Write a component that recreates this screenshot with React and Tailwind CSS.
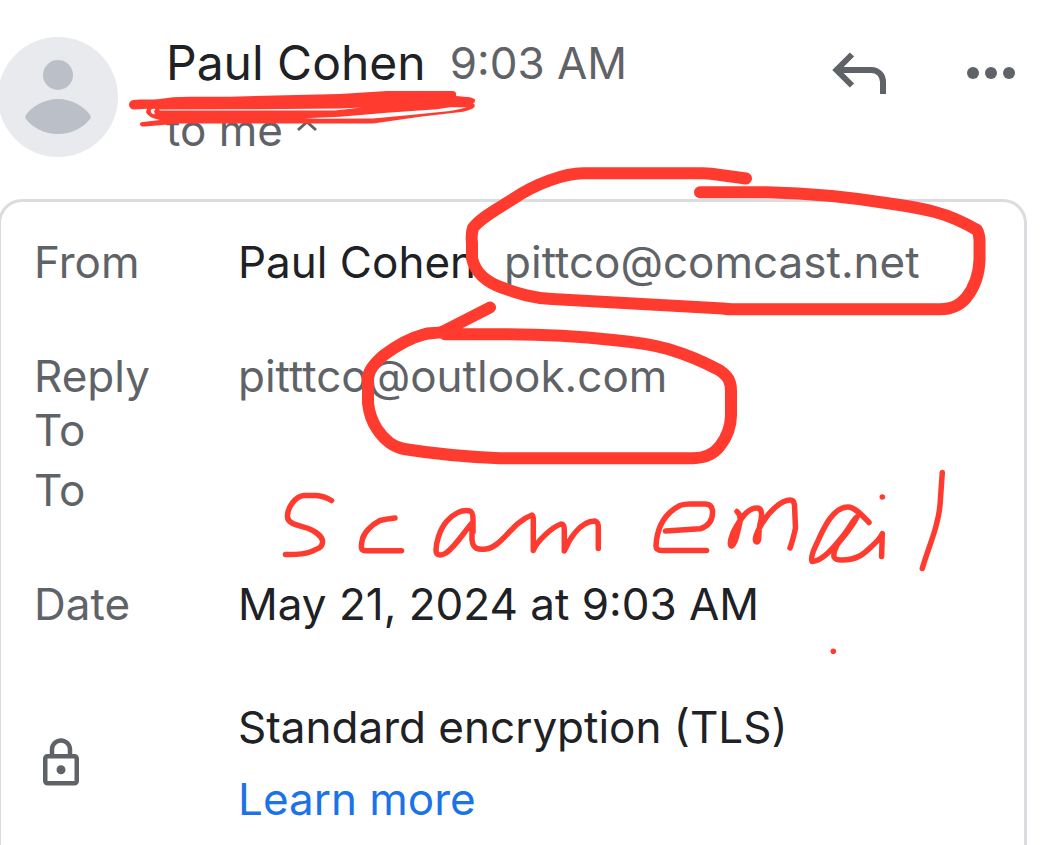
import React from "react";

function Avatar() {
  return (
    <svg className="-ml-0.5 h-[120px] w-[120px] shrink-0" viewBox="0 0 120 120" role="img" aria-label="Sender avatar">
      <circle cx="60" cy="60" r="60" fill="#e8eaed" />
      <circle cx="60" cy="38" r="15" fill="#bbbfc7" />
      <path d="M28 58C33 50 46 42 60 42s27 8 32 16c1 2 1 3 0 4C85 71 73 77 60 77S35 71 28 62c-1-1-1-2 0-4Z" transform="translate(0 20)" fill="#bbbfc7" />
    </svg>
  );
}

function ReplyIcon() {
  return (
    <svg className="block h-11 w-14" viewBox="0 0 56 44" fill="none" stroke="currentColor" strokeWidth="6" aria-hidden="true">
      <path d="M21 3.5 5.5 19 21 34.5" />
      <path d="M6 19h34c7 0 12 5 12 12v12" />
    </svg>
  );
}

function MoreIcon() {
  return (
    <svg className="block h-3 w-12" viewBox="0 0 48 12" fill="currentColor" aria-hidden="true">
      <circle cx="6" cy="6" r="6" />
      <circle cx="24" cy="6" r="6" />
      <circle cx="42" cy="6" r="6" />
    </svg>
  );
}

function LockIcon() {
  return (
    <svg className="h-[54px] w-[54px]" viewBox="0 0 24 24" fill="currentColor" role="img" aria-label="Encrypted">
      <path
        fillRule="evenodd"
        d="M18 8h-1V6c0-2.76-2.24-5-5-5S7 3.24 7 6v2H6c-1.1 0-2 .9-2 2v10c0 1.1.9 2 2 2h12c1.1 0 2-.9 2-2V10c0-1.1-.9-2-2-2ZM9 6c0-1.66 1.34-3 3-3s3 1.34 3 3v2H9V6Zm9 14H6V10h12v10Zm-6-3c1.1 0 2-.9 2-2s-.9-2-2-2-2 .9-2 2 .9 2 2 2Z"
      />
    </svg>
  );
}

function Row({ label, children }) {
  return (
    <div className="flex min-h-[108px] items-start">
      <dt className="w-[144px] shrink-0 text-[#5f6368]">{label}</dt>
      <dd className="ml-[60px] min-w-0 flex-1">{children}</dd>
    </div>
  );
}

function Markup() {
  return (
    <svg
      className="pointer-events-none absolute top-0 left-0 h-[845px] w-[1041px] max-w-none"
      viewBox="0 0 1041 845"
      fill="none"
      stroke="#ff3b30"
      strokeLinecap="round"
      strokeLinejoin="round"
      role="img"
      aria-label="Handwritten note: scam email"
    >
      <path
        stroke="none"
        fill="#ff3b30"
        fillRule="evenodd"
        d="M133 100C143 99 152 100 160 99L173 97.300C192 96.500 210 97 230 96.700L340 94 387 91H452Q457 91 456 96L470 97.300Q476 99 475 101 475 103 473 103 476 105 474 107.500 471 110 463 111.700L420 116.700 375 123.300Q372 123.700 368 123.600H180L145 126.500Q140 127 140 124 140 122 143 122L160 120Q147 117 146 112L147 108.800 133 109.500Q129 108 129 104.500 129 101 133 100Z
        M151 110Q150 113 154 114.500 155.500 113 154 112 154.500 110 155.500 109 152 108 151 110Z
        M159 109.500Q159 110.700 161 110.600H335L362 107.500 340 108.600 230 109.300Z
        M305 118.300 340 116.700 387 112.700 437 109.300 450 107.300H467Q460 109.500 450 111L413 114.700 373 118.400 320 118.800Z"
      />
      <g strokeWidth="12">
        <path d="M746 178.500 711 173.800Q707 173.300 703 173.300H584C565 173 535 184 513 199 499 208 480 218 473 228Q471 234 472 243V258C475 273 488 283 503 288 520 294 532 298 552 299L723 308.500Q728 309.300 733 309.300H940C953 309 960 305 966 298 974 288 979 277 979.500 260V240Q979 233 977 230C965 223 950 216 935 212 921 208 907 206 893 204 850 197 800 193 767 192.300H700" />
        <path d="M490 307.500 444 331Q440 333 434 333 427 333 422 335C410 338 395 347 384 355 377 361 369 369 368 377V403C369 412 371 420 377 429 385 441 393 447 404 449 435 454 470 457 500 458.300H693C706 458 714 454 720 446 727 437 731 428 731 415V391C731 381 728 376 719 370 706 363 688 355 668 349 650 344 635 342 613 340 575 336 541 334.500 507 334.300H445" />
      </g>
      <g strokeWidth="5.500">
        <path d="M331.500 500.500Q324 496 316 495.500H304C296 496 287 507 287.500 517 288 524 298 525 307 528 315 531 322 536 322.500 541 323 548 317 549 310 552 302 555 294 554.500 285.500 554.500" />
        <path d="M395 518Q386 519 380 520.500C371 525 364 533 362.500 539Q361 545 361.500 548 362 550.700 366 550.700H401.500" />
        <path d="M473 532V520Q473 512 470 511C462 509 453 514 447 521 439 530 436 544 436 550 436 556 441 556 446 553 455 547 464 532 472 523L472 540C473 549 478 550 486 549 502 547 512 522 532 515Q533 515 533.300 519V550.500C536 542 552 527 561 524 564 524 564.300 526 564.300 530V551C568 542 579 521 595 521Q598 522 598.300 526V548.500" />
        <path d="M706.500 550.500H662Q656 550.500 656 546C657 526 665 513 680 505.500Q684 504 690 504H705Q712 504 712.500 511C713 520 709 526 700 528.800L665.500 531" />
        <path d="M737 511.500Q741 515 740 522C737 535 735 545 731.500 546 729 545 731 535 736 527 742 517 748 508 757 508 763 508 762 517 760 524 758 532 760 541 757 542 753 541 757 531 763 522 769 512 781 500 790 500Q794 500 794.500 505L795.500 528Q793 540 790 548" />
        <path d="M869 522.500C862 515 854 506 847 507 833 508 824 527 817 543Q810 557 812 561.500C823 561 834 547 843 536 850 527 853 520 857 517 851 529 842 538 837 545 831 558 834 560 842 560 857 560 864 554 872 546Q880 539 882.300 533.500L881.600 556.500" />
        <path d="M942.300 472.500 940.500 498Q940 511 937 522C934 536 927 552 922.300 568.500" />
      </g>
      <g fill="#ff3b30" stroke="none">
        <circle cx="882.300" cy="497" r="2.800" />
        <circle cx="833.300" cy="651.300" r="2.800" />
      </g>
    </svg>
  );
}

export default function App() {
  return (
    <main className="relative flex min-h-screen flex-col overflow-hidden bg-white font-['Inter','Liberation_Sans',sans-serif] text-[44px] leading-[54px] text-[#202124]">
      <header className="flex h-[199px] items-start pt-[37px] pr-[26px]">
        <Avatar />
        <div className="ml-12 min-w-0 flex-1">
          <div className="-mt-1 flex items-center gap-6 whitespace-nowrap">
            <h1 className="text-5xl leading-[60px] font-normal">Paul Cohen</h1>
            <time className="text-[#5f6368]">9:03 AM</time>
          </div>
          <button type="button" className="mt-2.5 flex items-center gap-3.5 text-[#5f6368]">
            <span>to me</span>
            <svg className="mb-2 h-3 w-5" viewBox="0 0 20 12" fill="none" stroke="currentColor" strokeWidth="3" aria-hidden="true">
              <path d="m1 10 9-8 9 8" />
            </svg>
          </button>
        </div>
        <button type="button" aria-label="Reply" className="mt-3.5 text-[#5f6368]">
          <ReplyIcon />
        </button>
        <button type="button" aria-label="More options" className="mt-[30px] ml-20 text-[#5f6368]">
          <MoreIcon />
        </button>
      </header>

      <section className="mr-3.5 -ml-0.5 flex-1 rounded-t-3xl border-[3px] border-b-0 border-[#dadce0] pt-[33px] pl-[33px]">
        <dl className="flex flex-col gap-1.5">
          <Row label="From">
            <div className="flex flex-wrap gap-x-7">
              <span>Paul Cohen</span>
              <span className="text-[#5f6368]">pittco@comcast.net</span>
            </div>
          </Row>
          <Row label="Reply To">
            <span className="text-[#5f6368]">pitttco@outlook.com</span>
          </Row>
          <Row label="To" />
          <Row label="Date">May 21, 2024 at 9:03 AM</Row>
        </dl>
        <div className="mt-[15px] flex items-center text-[#5f6368]">
          <LockIcon />
          <div className="ml-[150px] flex flex-col items-start gap-[18px]">
            <p className="text-[#202124]">Standard encryption (TLS)</p>
            <a href="#encryption" className="text-[#1a73e8]">
              Learn more
            </a>
          </div>
        </div>
      </section>
      <Markup />
    </main>
  );
}
